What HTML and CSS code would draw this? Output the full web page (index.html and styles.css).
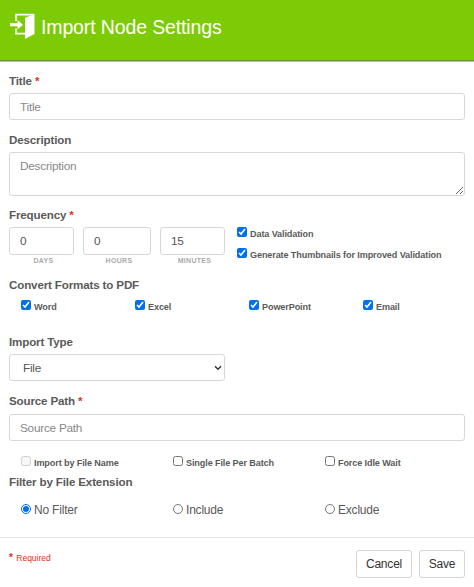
FILE: index.html
```html
<!DOCTYPE html>
<html lang="en">
<head>
<meta charset="utf-8">
<title>Import Node Settings</title>
<link rel="stylesheet" href="styles.css">
</head>
<body>
<form class="dialog">
  <header class="header">
    <svg class="door" viewBox="0 0 25 26" aria-hidden="true">
      <path d="M6 8V1.6H24M6 15.5V20.6H15" fill="none" stroke="#fff" stroke-width="1.6"/>
      <path d="M15 4.8L24.5 1V21L15 26Z" fill="#fff"/>
      <path d="M0 10.3H7.5V7L13 11.8L7.5 16.6V13.3H0Z" fill="#fff"/>
    </svg>
    <h1>Import Node Settings</h1>
  </header>
  <main class="body">
    <label class="label" for="title">Title <b>*</b></label>
    <input class="field" id="title" placeholder="Title">
    <label class="label" for="desc">Description</label>
    <textarea class="field area" id="desc" placeholder="Description"></textarea>
    <label class="label">Frequency <b>*</b></label>
    <div class="frequency">
      <div class="unit days"><input class="field" value="0"><span>DAYS</span></div>
      <div class="unit"><input class="field" value="0"><span>HOURS</span></div>
      <div class="unit minutes"><input class="field" value="15"><span>MINUTES</span></div>
      <div class="validation">
        <label class="check"><input type="checkbox" checked><span>Data Validation</span></label>
        <label class="check"><input type="checkbox" checked><span>Generate Thumbnails for Improved Validation</span></label>
      </div>
    </div>
    <div class="label formats-label">Convert Formats to PDF</div>
    <div class="formats">
      <label class="check"><input type="checkbox" checked><span>Word</span></label>
      <label class="check"><input type="checkbox" checked><span>Excel</span></label>
      <label class="check"><input type="checkbox" checked><span>PowerPoint</span></label>
      <label class="check"><input type="checkbox" checked><span>Email</span></label>
    </div>
    <label class="label" for="type">Import Type</label>
    <div class="select">
      <select class="field" id="type"><option>File</option></select>
      <svg class="chevron" viewBox="0 0 8 6" aria-hidden="true"><path d="M1 1.2L4 4.2L7 1.2" fill="none" stroke="#333" stroke-width="1.5"/></svg>
    </div>
    <label class="label source-label" for="path">Source Path <b>*</b></label>
    <input class="field" id="path" placeholder="Source Path">
    <div class="options">
      <label class="check"><input type="checkbox" disabled><span>Import by File Name</span></label>
      <label class="check"><input type="checkbox"><span>Single File Per Batch</span></label>
      <label class="check"><input type="checkbox"><span>Force Idle Wait</span></label>
    </div>
    <div class="label filter-label">Filter by File Extension</div>
    <div class="options radios">
      <label class="check"><input type="radio" name="filter" checked><span>No Filter</span></label>
      <label class="check"><input type="radio" name="filter"><span>Include</span></label>
      <label class="check"><input type="radio" name="filter"><span>Exclude</span></label>
    </div>
  </main>
  <footer class="footer">
    <p class="required"><b>*</b> Required</p>
    <button type="button" class="cancel">Cancel</button>
    <button type="button" class="save">Save</button>
  </footer>
</form>
</body>
</html>
```
FILE: styles.css
```css
* { box-sizing: border-box; }
body {
  margin: 0;
  background: #fff;
  color: #5a5a5a;
  font-family: "Liberation Sans", Arial, sans-serif;
  font-size: 11px;
}
.dialog { height: 587px; overflow: hidden; }
.header {
  display: flex;
  height: 62px;
  padding: 13px 0 0 10px;
  background: #7ccb04;
  border-bottom: 1px solid #b9bdb4;
  box-shadow: inset 0 -1px #6f9438;
}
.door { width: 25px; height: 26px; }
h1 {
  margin: 2px 0 0 6px;
  color: #fff;
  font-size: 19.5px;
  font-weight: 400;
  line-height: 24px;
  letter-spacing: -.13px;
}
.body { height: 475px; padding: 11px 9px 0; }
.label {
  display: block;
  height: 20px;
  padding-top: 1px;
  font-size: 11.6px;
  font-weight: 700;
  line-height: 14px;
  letter-spacing: -.15px;
}
.label b, .required b { color: #e03018; }
.field {
  display: block;
  width: 100%;
  height: 27px;
  margin: 0 0 12px;
  padding: 0 10px;
  border: 1px solid #d8d8d8;
  border-radius: 3px;
  background: #fff;
  color: #555;
  font: 11.8px "Liberation Sans", Arial, sans-serif;
  letter-spacing: -.25px;
}
.field::placeholder { color: #888; opacity: 1; }
.area { height: 44px; margin-bottom: 11px; padding-top: 6px; resize: vertical; }
.frequency { display: flex; height: 50px; }
.unit { width: 68px; margin-right: 9px; text-align: center; }
.days { width: 65px; }
.minutes { width: 65px; margin-right: 12px; }
.unit .field { height: 28px; margin: 0; }
.unit span {
  display: block;
  padding: 1px 0 0 4px;
  color: #aaa;
  font-size: 7px;
  font-weight: 700;
  line-height: 10px;
  letter-spacing: .3px;
}
.check { display: flex; height: 21px; font-size: 9.1px; letter-spacing: -.12px; font-weight: 700; line-height: 14px; white-space: nowrap; }
.check input { flex: none; width: 10px; height: 10px; margin: 0 3px 0 0; accent-color: #0070ee; }
.formats { display: grid; grid-template-columns: repeat(4, 114px); height: 37px; padding: 3px 0 0 12px; }
.select { position: relative; width: 216px; }
.select .field { appearance: none; padding-left: 13px; }
.chevron { position: absolute; right: 3px; top: 11px; width: 8px; height: 6px; }
.source-label { height: 21px; }
.options { display: grid; grid-template-columns: repeat(3, 152px); height: 21px; padding: 3px 0 0 12px; }
.radios { height: 28px; padding-top: 9px; }
.radios .check { font-size: 12px; font-weight: 400; letter-spacing: -.2px; }
.radios input { margin-top: 1px; }
.footer { display: flex; height: 50px; padding: 12px 9px 0; border-top: 1px solid #e3e3e3; }
.required { flex: 1; margin: 1px 0 0; color: #e03018; font-size: 8.5px; line-height: 14px; }
.required b { margin-right: 1px; font-size: 10px; }
button {
  height: 28px;
  padding: 0;
  border: 1px solid #d5d5d5;
  border-radius: 3px;
  background: #fff;
  color: #333;
  font: 12px "Liberation Sans", Arial, sans-serif;
  letter-spacing: -.2px;
}
.cancel { width: 56px; margin-right: 7px; }
.save { width: 46px; }
```
